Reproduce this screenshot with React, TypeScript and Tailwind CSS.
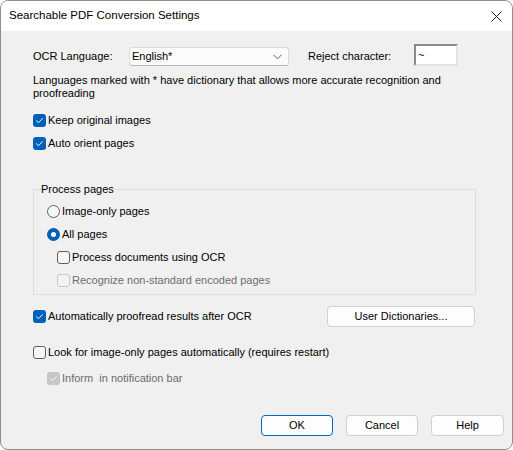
import React from "react";

const font = { fontFamily: '"Liberation Sans", Arial, sans-serif' };

function Check({ checked, disabled }: { checked?: boolean; disabled?: boolean }) {
  if (checked) {
    return (
      <span
        className={
          "flex h-[13px] w-[13px] shrink-0 items-center justify-center rounded-[3px] " +
          (disabled ? "bg-[#c6c6c6]" : "bg-[#005fb8]")
        }
      >
        <svg width="13" height="13" viewBox="0 0 13 13" fill="none">
          <path d="M3.5 6.8 L5.5 8.7 L9.5 4.6" stroke="#fff" strokeWidth="1" strokeLinecap="round" strokeLinejoin="round" />
        </svg>
      </span>
    );
  }
  return (
    <span
      className={
        "block h-[13px] w-[13px] shrink-0 rounded-[3px] border " +
        (disabled ? "border-[#c8c8c8] bg-[#f3f3f3]" : "border-[#5f5f5f] bg-[#f6f6f6]")
      }
    />
  );
}

function Radio({ checked }: { checked?: boolean }) {
  if (checked) {
    return (
      <span className="flex h-[13px] w-[13px] shrink-0 items-center justify-center rounded-full bg-[#005fb8]">
        <span className="block h-[5px] w-[5px] rounded-full bg-white" />
      </span>
    );
  }
  return <span className="block h-[13px] w-[13px] shrink-0 rounded-full border border-[#5f5f5f] bg-[#f6f6f6]" />;
}

function Row({
  children,
  label,
  disabled,
  className = "",
}: {
  children: React.ReactNode;
  label: string;
  disabled?: boolean;
  className?: string;
}) {
  return (
    <div className={"flex h-[13px] items-center gap-[2px] " + className}>
      {children}
      <span className={"whitespace-pre leading-[13px] " + (disabled ? "text-[#6d6d6d]" : "text-black")}>{label}</span>
    </div>
  );
}

function Button({ label, primary, className = "" }: { label: string; primary?: boolean; className?: string }) {
  return (
    <div
      className={
        "flex h-[21px] items-center justify-center rounded-[4px] border bg-[#fdfdfd] text-black " +
        (primary ? "border-[#0067c0]" : "border-[#d0d0d0]") +
        " " +
        className
      }
    >
      {label}
    </div>
  );
}

export default function App() {
  return (
    <div
      style={font}
      className="flex h-[450px] w-[513px] flex-col overflow-hidden rounded-[8px] border border-[#8f8f8f] bg-[#f0f0f0] text-[11px] text-black"
    >
      <div className="flex h-[30px] shrink-0 items-center justify-between bg-white pl-[8px] pr-[10px]">
        <span className="text-[11.5px]">Searchable PDF Conversion Settings</span>
        <svg width="11" height="11" viewBox="0 0 11 11" fill="none">
          <path d="M0.5 0.5 L10.5 10.5 M10.5 0.5 L0.5 10.5" stroke="#1a1a1a" strokeWidth="1" />
        </svg>
      </div>

      <div className="flex flex-1 flex-col pl-[32px] pt-[13px]">
        <div className="flex h-[22px] items-start">
          <span className="mt-[3px] w-[96px] leading-[19px]">OCR Language:</span>
          <div className="mt-[3px] flex h-[19px] w-[160px] items-center justify-between rounded-[3px] border border-[#dadada] border-b-[#b8b8b8] bg-[#fbfbfb] pl-[2px] pr-[6px]">
            <span>English*</span>
            <svg width="9" height="6" viewBox="0 0 9 6" fill="none">
              <path d="M0.5 0.8 L4.5 4.8 L8.5 0.8" stroke="#606060" strokeWidth="1" />
            </svg>
          </div>
          <span className="ml-[19px] mt-[3px] w-[106px] leading-[19px]">Reject character:</span>
          <div className="flex h-[22px] w-[44px] items-center border-2 border-b-[#e3e3e3] border-l-[#8a8a8a] border-r-[#e3e3e3] border-t-[#8a8a8a] bg-white pl-[2px]">
            ~
          </div>
        </div>

        <p className="mt-[8px] w-[450px] leading-[13px]">
          Languages marked with * have dictionary that allows more accurate recognition and proofreading
        </p>

        <div className="mt-[14px] flex flex-col gap-[10px]">
          <Row label="Keep original images">
            <Check checked />
          </Row>
          <Row label="Auto orient pages">
            <Check checked />
          </Row>
        </div>

        <fieldset className="mt-[31px] w-[443px] border border-[#dcdcdc] pb-[7px] pt-[8px]">
          <legend className="ml-[7px] leading-[16px]">Process pages</legend>
          <div className="flex flex-col gap-[10px] pl-[13px]">
            <Row label="Image-only pages">
              <Radio />
            </Row>
            <Row label="All pages">
              <Radio checked />
            </Row>
            <Row label="Process documents using OCR" className="ml-[10px]">
              <Check />
            </Row>
            <Row label="Recognize non-standard encoded pages" className="ml-[10px]" disabled>
              <Check disabled />
            </Row>
          </div>
        </fieldset>

        <div className="mt-[11px] flex h-[21px] w-[442px] items-center justify-between">
          <Row label="Automatically proofread results after OCR">
            <Check checked />
          </Row>
          <Button label="User Dictionaries..." className="w-[148px]" />
        </div>

        <Row label="Look for image-only pages automatically (requires restart)" className="mt-[19px]">
          <Check />
        </Row>
        <Row label="Inform  in notification bar" className="ml-[14px] mt-[13px]" disabled>
          <Check checked disabled />
        </Row>

        <div className="mt-auto flex justify-end gap-[13px] pb-[13px] pr-[8px]">
          <Button label="OK" primary className="w-[72px]" />
          <Button label="Cancel" className="w-[72px]" />
          <Button label="Help" className="w-[73px]" />
        </div>
      </div>
    </div>
  );
}
